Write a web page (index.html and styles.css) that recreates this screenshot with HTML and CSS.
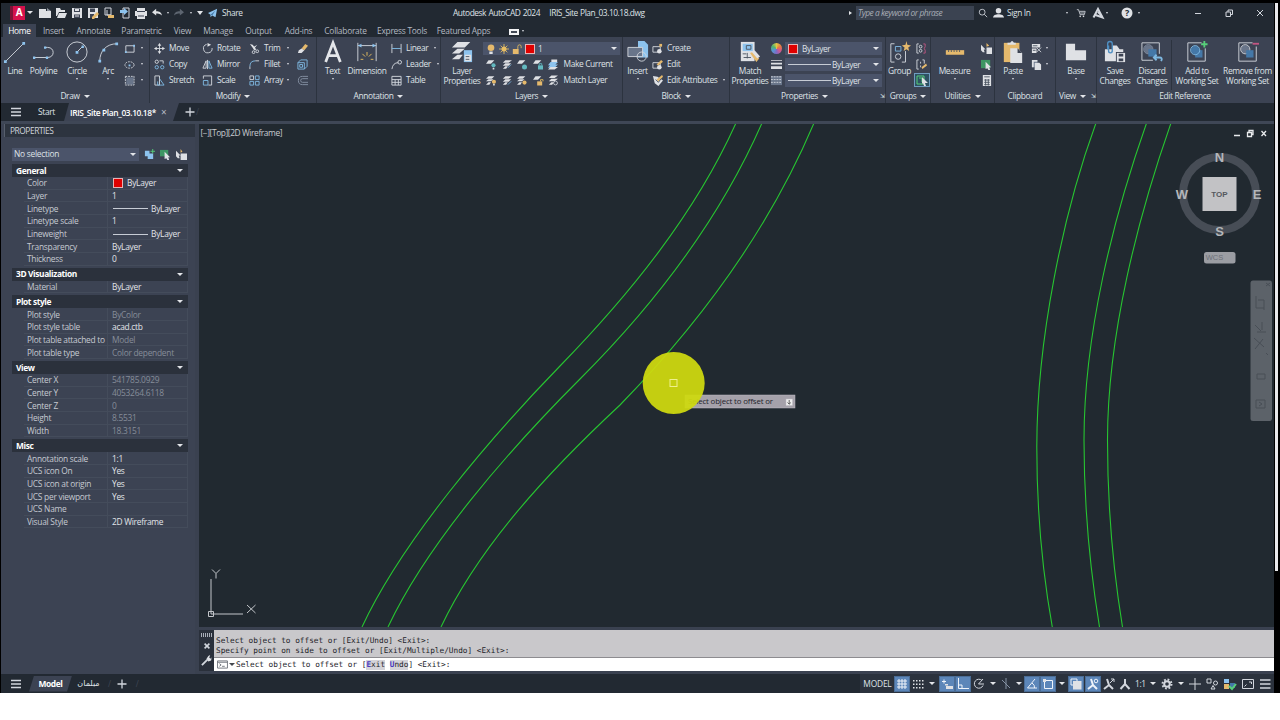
FILE: index.html
```html
<!DOCTYPE html>
<html lang="en">
<head>
  <meta charset="UTF-8" />
  <meta name="viewport" content="width=device-width, initial-scale=1" />
  <title>Autodesk AutoCAD 2024 - IRIS_Site Plan_03.10.18.dwg</title>
  <link rel="stylesheet" href="styles.css">
</head>
<body>
<div class="screen">
<div class="app">

  <!-- Title bar -->
  <header class="titlebar">
    <div class="quick">
      <span class="logo">A</span><i class="caret"></i>
      <svg class="ic q1" viewBox="0 0 12 12"><path class="w" d="M0 2h7v2h5v7H0z"/><path class="g" d="M8 1l4 3H8z"/></svg>
      <svg class="ic" viewBox="0 0 12 12"><path class="w" d="M1 1h4l1 2h4v2H4L2 9H1z"/><path class="w" d="M4 6h8l-2 5H2z"/></svg>
      <svg class="ic" viewBox="0 0 12 12"><path class="w" d="M1 1h10v10H1z"/><path class="k" d="M3 1.5h6V5H3zM3 7.500h6V11H3z"/><path class="w" d="M4 2h4v2H4zM4 8.500h4v1H4z"/></svg>
      <svg class="ic" viewBox="0 0 12 12"><path class="w" d="M1 1h10v10H1z"/><path class="k" d="M3 1.500h5V5H3zM3 7h4v4H3z"/><path class="y" d="M5 10l5-5 2 2-5 5H5z"/></svg>
      <svg class="ic" viewBox="0 0 12 12"><path class="l" d="M2 1h6v7H2z"/><path class="l" d="M4 3v5h4"/><path class="y" d="M5 8h6v3H5z"/></svg>
      <svg class="ic" viewBox="0 0 12 12"><path class="l" d="M4 1h6v10H4z"/><path class="b" d="M1 3h4V1l4 3.500L5 8V6H1z"/></svg>
      <svg class="ic" viewBox="0 0 12 12"><path class="w" d="M2 1h8v3H2zM0 4h12v5H0zM2 9h8v3H2z"/><path class="k" d="M2 4h8v1H2zM3 8.500h6v1H3z"/></svg>
      <svg class="ic undo" viewBox="0 0 12 12"><path class="w" d="M0 5l5-4v3c4 0 6 1 7 5-2-2-4-2.500-7-2.500V9z"/></svg><i class="dot"></i>
      <svg class="ic redo" viewBox="0 0 12 12"><path d="M12 5L7 1v3C3 4 1 5 0 9c2-2 4-2.500 7-2.500V9z"/></svg><i class="dot"></i>
      <i class="caret bar"></i>
      <svg class="ic share" viewBox="0 0 12 12"><path class="b" d="M0 6l11-5-2 10-4-2-2 2V8z"/><path class="n" d="M3 8l6-5-4 6"/></svg>
      <span>Share</span>
    </div>
    <div class="doc-title">Autodesk AutoCAD 2024&nbsp;&nbsp;&nbsp; IRIS_Site Plan_03.10.18.dwg</div>
    <div class="account">
      <i class="right-arrow"></i>
      <div class="search">Type a keyword or phrase</div>
      <svg class="ic mag" viewBox="0 0 12 12"><circle class="l" cx="5" cy="5" r="3.500"/><path class="l" d="M7.500 7.500L11 11"/></svg>
      <svg class="ic user" viewBox="0 0 12 12"><circle class="w" cx="6" cy="3.500" r="3"/><path class="w" d="M0 11c0-5 12-5 12 0z"/></svg>
      <span class="sign">Sign In</span><i class="dot"></i>
      <svg class="ic cart" viewBox="0 0 12 12"><path class="l" d="M1 2h2l2 6h5l1-4H4M5 6h5"/><circle class="w" cx="5" cy="10" r="1"/><circle class="w" cx="9" cy="10" r="1"/></svg>
      <svg class="ic" viewBox="0 0 12 12"><path class="l t" d="M1.500 10.500L6 2l4.500 8.500L3.500 8M6 5l4 4"/></svg><i class="dot"></i>
      <svg class="ic help" viewBox="0 0 12 12"><circle class="w" cx="6" cy="6" r="5.500"/><text x="6" y="9" text-anchor="middle">?</text></svg><i class="dot"></i>
    </div>
    <div class="window-buttons">
      <svg class="ic" viewBox="0 0 10 10"><path class="l" d="M2 5.500h6"/></svg>
      <svg class="ic" viewBox="0 0 10 10"><path class="l" d="M2 4h4.500v4.500H2zM4 4V2h4.500v4.500h-2"/></svg>
      <svg class="ic" viewBox="0 0 10 10"><path class="l" d="M2 2l6 6M8 2L2 8"/></svg>
    </div>
  </header>

  <!-- Ribbon tabs -->
  <nav class="tabs">
    <span class="tab active">Home</span><span class="tab">Insert</span><span class="tab">Annotate</span><span class="tab">Parametric</span><span class="tab">View</span><span class="tab">Manage</span><span class="tab">Output</span><span class="tab">Add-ins</span><span class="tab">Collaborate</span><span class="tab">Express Tools</span><span class="tab">Featured Apps</span>
    <span class="tab-box"></span><i class="dot"></i>
  </nav>

  <!-- Ribbon -->
  <section class="ribbon">
    <div class="panel draw">
      <div class="tools">
        <div class="big"><svg viewBox="0 0 24 24"><path class="l" d="M2 22L22 2"/><path class="b" d="M0 21h3v3H0zM20 1h3v3h-3z"/></svg>Line</div>
        <div class="big"><svg viewBox="0 0 24 24"><path class="l" d="M1 18h15c8 0 8-11 0-11h-3"/><path class="b" d="M0 17h2.500v2.500H0zM14 17h2.500v2.500H14zM12 6h2.500v2.500H12z"/></svg>Polyline</div>
        <div class="big"><svg viewBox="0 0 24 24"><circle class="l" cx="12" cy="12" r="11"/><path class="l" d="M12 12l6-6"/><path class="b" d="M10.500 11h3v3h-3zM17 5h2.500v2.500H17z"/></svg>Circle<i class="dot"></i></div>
        <div class="big"><svg viewBox="0 0 24 24"><path class="l" d="M3 22C3 11 10 3 22 3"/><path class="b" d="M1.500 20.500h3v3h-3zM6 8.500h3v3H6zM20 1.500h3v3h-3z"/></svg>Arc<i class="dot"></i></div>
        <div class="stack">
          <div class="small"><svg viewBox="0 0 12 12"><path class="l" d="M2 3h9v7H2z"/><path class="b" d="M1 9h2v2H1zM10 2h2v2h-2z"/></svg><i class="dot"></i></div>
          <div class="small"><svg viewBox="0 0 12 12"><ellipse class="l d" cx="6" cy="6.500" rx="5" ry="3.500"/><path class="b" d="M5 6h2v2H5z"/></svg><i class="dot"></i></div>
          <div class="small"><svg viewBox="0 0 12 12"><path class="m" d="M2.500 2.500h8v8h-8z"/><path class="l d" d="M1.500 1.500h9.500V11H1.500z"/></svg><i class="dot"></i></div>
        </div>
      </div>
      <div class="caption">Draw <i class="caret"></i></div>
    </div>

    <div class="panel modify">
      <div class="tools">
        <div class="stack">
          <div class="small"><svg viewBox="0 0 12 12"><path class="l" d="M6 1v10M1 6h10"/><path class="w" d="M6 0l2 3H4zM6 12l2-3H4zM0 6l3-2v4zM12 6L9 4v4z"/></svg>Move</div>
          <div class="small"><svg viewBox="0 0 12 12"><circle class="l" cx="3" cy="3" r="1.800"/><circle class="bl" cx="3" cy="9" r="1.800"/><circle class="bl" cx="9" cy="9" r="1.800"/><path class="l" d="M6 2h4v3"/></svg>Copy</div>
          <div class="small"><svg viewBox="0 0 12 12"><path class="l" d="M1 1h5v10H1z"/><path class="bl" d="M6 4l5 7H4V7"/></svg>Stretch</div>
        </div>
        <div class="stack">
          <div class="small"><svg viewBox="0 0 12 12"><path class="l" d="M5 1.500a4.700 4.700 0 1 0 6 4"/><path class="w" d="M6 0l4 2-4 2z"/></svg>Rotate</div>
          <div class="small"><svg viewBox="0 0 12 12"><path class="l" d="M4.500 2v8H1zM6 1v10"/><path class="bl" d="M7.500 2v8H11z"/></svg>Mirror</div>
          <div class="small"><svg viewBox="0 0 12 12"><path class="l" d="M1.500 4V1h9v10H7"/><path class="bl" d="M1.500 6h5v5h-5z"/></svg>Scale</div>
        </div>
        <div class="stack carets">
          <div class="small"><svg viewBox="0 0 12 12"><path class="w" d="M1 1l3 1 4 5-2 1zM9 2L5 7 4 5z"/><circle class="l" cx="5" cy="10" r="1.500"/><circle class="l" cx="9" cy="9" r="1.500"/></svg>Trim<i class="dot"></i></div>
          <div class="small"><svg viewBox="0 0 12 12"><path class="l" d="M1 11V8"/><path class="bl" d="M1 8q0-6 6-6"/><path class="l" d="M7 2h4"/></svg>Fillet<i class="dot"></i></div>
          <div class="small"><svg viewBox="0 0 12 12"><path class="l" d="M1 1h4v4H1z"/><path class="bl" d="M7 1h4v4H7zM1 7h4v4H1zM7 7h4v4H7z"/></svg>Array<i class="dot"></i></div>
        </div>
        <div class="stack icons">
          <div class="small"><svg viewBox="0 0 12 12"><path class="y" d="M5 6l4-5 3 2-4 5z"/><path class="w" d="M2 8l3-2 3 2-3 3H1z"/></svg></div>
          <div class="small"><svg viewBox="0 0 12 12"><path class="bl" d="M1 4h7v7H1zM1 4l3-3h7v7l-3 3M3 6h3v3H3z"/></svg></div>
          <div class="small"><svg viewBox="0 0 12 12"><path class="ml" d="M12 1.500H6a4.500 4.500 0 0 0 0 9h6M12 4H6a2 2 0 0 0 0 4h6"/></svg></div>
        </div>
      </div>
      <div class="caption">Modify <i class="caret"></i></div>
    </div>

    <div class="panel annotation">
      <div class="tools">
        <div class="big"><svg viewBox="0 0 24 24"><path class="al" d="M4 23l8-21 8 21M7 16h10"/></svg>Text<i class="dot"></i></div>
        <div class="big"><svg viewBox="0 0 24 24"><path class="l" d="M2 2v20M22 2v20M2 5h20"/><path class="b" d="M2 5l4-2v4zM22 5l-4-2v4z"/><path class="yl" d="M5 20h3M16 20h3M7 14l3 3M12 12v4M17 14l-3 3"/></svg>Dimension</div>
        <div class="stack">
          <div class="small"><svg viewBox="0 0 12 12"><path class="l" d="M1 1v10M11 1v10"/><path class="bl" d="M1 6h10"/></svg>Linear<i class="dot"></i></div>
          <div class="small"><svg viewBox="0 0 12 12"><path class="l" d="M1 11q1-7 7-7"/><circle class="l" cx="9.500" cy="3.500" r="2"/></svg>Leader<i class="dot"></i></div>
          <div class="small"><svg viewBox="0 0 12 12"><path class="l" d="M1 1.500h10v9.500H1zM1 5h10M1 8h10M4.500 5v6M8 5v6"/></svg>Table</div>
        </div>
      </div>
      <div class="caption">Annotation <i class="caret"></i></div>
    </div>

    <div class="panel layers">
      <div class="tools">
        <div class="big"><svg viewBox="0 0 24 24"><path class="w" d="M7 1h14l-6 6H1zM7 8.500h8l-6 5H1zM7 15h6l-4 5H1z"/><path class="b" d="M14 10h9v13h-9z"/><path class="w" d="M15 15h7v7h-7z"/><path class="kl" d="M16 17h4M16 20h4"/></svg>Layer<br>Properties</div>
        <div class="layer-grid">
          <div class="combo layer-combo">
            <svg viewBox="0 0 12 12"><circle class="y" cx="6" cy="4.500" r="4"/><path class="w" d="M4 9h4v3H4z"/></svg>
            <svg viewBox="0 0 12 12"><circle class="y" cx="6" cy="6" r="3"/><path class="yl" d="M6 0v12M0 6h12M2 2l8 8M10 2l-8 8"/></svg>
            <svg viewBox="0 0 12 12"><path class="y" d="M1 6h7v6H1z"/><path class="yl" d="M7 6V3a2 2 0 0 1 4 0v2"/></svg>
            <b class="swatch"></b><span>1</span><i class="caret"></i>
          </div>
          <div class="layer-row">
            <svg viewBox="0 0 12 12"><path class="w" d="M3 1h7L6 5H0z"/><circle class="c" cx="9" cy="7" r="2.500"/><path class="w" d="M8 10h2v2H8z"/></svg>
            <svg viewBox="0 0 12 12"><path class="w" d="M4 1h8L8 4H1zM4 4.500h7L8 7.500H1zM4 8h3l-2 3H1z"/><path class="bl" d="M7 10l4-4"/></svg>
            <svg viewBox="0 0 12 12"><path class="w" d="M3 1h7L6 5H0z"/><circle class="c" cx="9" cy="9" r="3"/></svg>
            <svg viewBox="0 0 12 12"><path class="w" d="M3 1h7L6 5H0z"/><path class="c" d="M6 7h6v5H6z"/><path class="cl" d="M7.500 7V5h3v2"/></svg>
            <svg viewBox="0 0 12 12"><path class="w" d="M4 0h7v3H4z"/><path class="b" d="M3 3h9L8 7H0zM3 6h9L8 10H0z"/><path class="w" d="M3 9h9l-4 3H0z"/></svg>
            <span>Make Current</span>
          </div>
          <div class="layer-row">
            <svg viewBox="0 0 12 12"><path class="w" d="M3 1h7L7 4H0zM3 4.500h6L6 7H0zM3 8h3l-2 3H0z"/><circle class="y" cx="9.500" cy="7.500" r="2.500"/><path class="w" d="M8.500 10h2v2h-2z"/></svg>
            <svg viewBox="0 0 12 12"><path class="w" d="M4 1h8L8 4H1zM4 4.500h7L8 7.500H1zM4 8h3l-2 3H1z"/><path class="bl" d="M7 11l4-4"/></svg>
            <svg viewBox="0 0 12 12"><path class="w" d="M3 1h7L7 4H0zM3 4.500h6L6 7H0zM3 8h3l-2 3H0z"/><circle class="y" cx="9" cy="8.500" r="2.500"/></svg>
            <svg viewBox="0 0 12 12"><path class="w" d="M3 1h7L6 5H0z"/><path class="y" d="M5 7h6v5H5z"/><path class="yl" d="M9 7V5h3v2"/></svg>
            <svg viewBox="0 0 12 12"><path class="w" d="M4 0h8L8 3H1zM4 4h8L8 7H1zM4 8h3l-2 3H1z"/><circle class="l" cx="9" cy="9" r="2.300"/></svg>
            <span>Match Layer</span>
          </div>
        </div>
      </div>
      <div class="caption">Layers <i class="caret"></i></div>
    </div>

    <div class="panel block">
      <div class="tools">
        <div class="big"><svg viewBox="0 0 24 24"><path class="b" d="M12 0h7l4 4v14H12z"/><path class="m" d="M1 7h16v10H1z"/><path class="l" d="M1 7h16v10H1z"/><circle class="l" cx="16" cy="17" r="5"/></svg>Insert<i class="dot"></i></div>
        <div class="stack">
          <div class="small"><svg viewBox="0 0 12 12"><path class="l" d="M1 4h8v6H1z"/><circle class="w" cx="8" cy="9" r="2.500"/><path class="y" d="M8 1h3v3H8z"/></svg>Create</div>
          <div class="small"><svg viewBox="0 0 12 12"><path class="l" d="M1 4h8v6H1z"/><circle class="w" cx="8" cy="9" r="2.500"/><path class="y" d="M5 6l5-5 2 2-5 4z"/></svg>Edit</div>
          <div class="small"><svg viewBox="0 0 12 12"><path class="w" d="M1 1l5 1 6 4-5 6-4-3z"/><path class="y" d="M5 5l6-5 1 2-5 5z"/><path class="kl" d="M4 5l3 3 3-4"/></svg>Edit Attributes<i class="dot"></i></div>
        </div>
      </div>
      <div class="caption">Block <i class="caret"></i></div>
    </div>

    <div class="panel props">
      <div class="tools">
        <div class="big"><svg viewBox="0 0 24 24"><path class="w" d="M2 1h15v21H2z"/><path class="b" d="M4 3h11v8H4z"/><path class="kl" d="M8 5h5v4H8zM4 14h4M5 18h8M9 13v6"/><path class="y" d="M12 13l3-1 7 7-3 4z"/><path class="w" d="M14 12l3-2 6 7-3 2z"/></svg>Match<br>Properties</div>
        <div class="stack icons">
          <div class="small"><b class="wheel"></b></div>
          <div class="small"><svg viewBox="0 0 12 12"><path class="w" d="M0 1h12v1H0zM0 4h12v2H0zM0 8h12v3H0z"/></svg></div>
          <div class="small"><svg viewBox="0 0 12 12"><path class="m" d="M0 1h12v10H0z"/><path class="l d" d="M0 2h12M0 5h12M0 8h12"/></svg></div>
        </div>
        <div class="combos">
          <div class="combo"><b class="swatch"></b><span>ByLayer</span><i class="caret"></i></div>
          <div class="combo"><b class="rule"></b><span>ByLayer</span><i class="caret"></i></div>
          <div class="combo"><b class="rule"></b><span>ByLayer</span><i class="caret"></i></div>
        </div>
      </div>
      <div class="caption">Properties <i class="caret"></i><small>⇲</small></div>
    </div>

    <div class="panel groups">
      <div class="tools">
        <div class="big"><svg viewBox="0 0 24 24"><path class="l" d="M6 3H2v20h4M14 23h4V11"/><path class="bl" d="M7 6h6v5H7z"/><circle class="l" cx="10" cy="17" r="3"/><path class="y" d="M19 0l1 4 4 1-3 2 1 4-3-2-3 2 1-4-3-2 4-1z"/></svg>Group</div>
        <div class="stack icons">
          <div class="small"><svg viewBox="0 0 12 12"><path class="l" d="M3 1H1v10h2"/><circle class="l" cx="5" cy="4" r="1.500"/><circle class="l" cx="5" cy="8.500" r="1.500"/><path class="pl" d="M8 1h2v3l-1 2 1 2v3H8"/></svg></div>
          <div class="small"><svg viewBox="0 0 12 12"><path class="l" d="M3 1H1v10h2M7 1h2v4M5 3v2M5 7v2"/><path class="y" d="M6 9l5-4 1 2-5 4z"/></svg></div>
          <div class="small"><svg class="on" viewBox="0 0 16 14"><path class="gl" d="M3 3h7v8H3zM5 5h3v4"/><path class="w" d="M8 4l6 6-3 0 1 3-2 0-1-3-1 1z"/></svg></div>
        </div>
      </div>
      <div class="caption">Groups <i class="caret"></i></div>
    </div>

    <div class="panel utilities">
      <div class="tools">
        <div class="big"><svg viewBox="0 0 24 24"><path class="y" d="M2 10h20v5H2z"/><path class="kl" d="M5 10v2M8 10v2M11 10v2M14 10v2M17 10v2"/></svg>Measure<i class="dot"></i></div>
        <div class="stack icons">
          <div class="small"><svg viewBox="0 0 12 12"><path class="w" d="M0 2l5 5-2 0 1 3-2 0L0 8zM6 5h6v7H6z"/><path class="y" d="M6 0l3 3-3 1z"/></svg></div>
          <div class="small"><svg viewBox="0 0 12 12"><path class="gg" d="M0 1h10v9H0z"/><path class="w" d="M5 3l6 6-2 0 1 3-2 0-1-2-2 1z"/></svg></div>
          <div class="small"><svg viewBox="0 0 12 12"><path class="w" d="M2 0h9v12H2z"/><path class="kl" d="M3.500 2h6M3.500 5.500h6M3.500 8h6M3.500 10.500h6M5 4.500v7M8 4.500v7"/></svg></div>
        </div>
      </div>
      <div class="caption">Utilities <i class="caret"></i></div>
    </div>

    <div class="panel clipboard">
      <div class="tools">
        <div class="big"><svg viewBox="0 0 24 24"><path class="y" d="M2 2h17v21H2z"/><path class="w" d="M6 4h9V2h-2q-2-4-4 0H6zM9 8h8l5 5v11H9z"/><path class="k" d="M17 8l5 5h-5z"/></svg>Paste<i class="dot"></i></div>
        <div class="stack carets">
          <div class="small"><svg viewBox="0 0 12 12"><path class="w" d="M1 1h9v4H1zM1 6h5v5H1z"/><path class="kl" d="M2 3h5M2 8h3"/><path class="l" d="M6 10l5-5M6 5l5 5"/></svg><i class="dot"></i></div>
          <div class="small"><svg viewBox="0 0 12 12"><path class="m" d="M1 1h6v8H1z"/><path class="w" d="M1 1h6v2H3v6H1zM4 4h5l2 2v6H4z"/></svg><i class="dot"></i></div>
        </div>
      </div>
      <div class="caption">Clipboard</div>
    </div>

    <div class="panel view">
      <div class="tools">
        <div class="big"><svg viewBox="0 0 24 24"><path class="w" d="M1 3h10v7h12v11H1z"/></svg>Base<i class="dot"></i></div>
      </div>
      <div class="caption">View <i class="caret"></i><small>⇲</small></div>
    </div>

    <div class="panel reference">
      <div class="tools">
        <div class="big"><svg viewBox="0 0 24 24"><path class="w" d="M1 9h8V5h5l3 4h4v13H1z"/><path class="nl" d="M4 9V3a2.500 2.500 0 0 1 5 0v8a2 2 0 0 1-4 0V5"/><path class="k" d="M13 12h11v12H13z"/><path class="w" d="M14 13h9v10h-9z"/><path class="k" d="M16 14h5v3h-5zM16 19h5v3h-5z"/></svg>Save<br>Changes</div>
        <div class="big"><svg viewBox="0 0 24 24"><path class="l" d="M20 14V2H1v19h12"/><circle class="m" cx="8" cy="9" r="4.500"/><circle class="ml" cx="8" cy="9" r="5"/><path class="n" d="M8 9h9v8H8z"/><path class="bl t" d="M14 18h6q4 0 2 4M17 15l-3 3 3 3"/></svg>Discard<br>Changes</div>
        <div class="big"><svg viewBox="0 0 24 24"><path class="l" d="M17 2H2v20h19V8"/><circle class="n" cx="10" cy="10" r="4.500"/><path class="n" d="M10 10h8v8h-8z"/><circle class="bl" cx="10" cy="10" r="5"/><path class="gl t" d="M20 0v7M16.500 3.500h7"/></svg>Add to<br>Working Set</div>
        <div class="big"><svg viewBox="0 0 24 24"><path class="l" d="M17 2H2v20h19V6"/><circle class="m" cx="9" cy="9" r="4.500"/><circle class="l" cx="9" cy="9" r="5"/><path class="n" d="M10 10h8v8h-8z"/><path class="pl t" d="M17 3h7"/></svg>Remove from<br>Working Set</div>
      </div>
      <div class="caption">Edit Reference</div>
    </div>
  </section>

  <!-- Open files -->
  <div class="files">
    <svg class="burger" viewBox="0 0 12 12"><path class="l" d="M1 2.500h10M1 6h10M1 9.500h10"/></svg>
    <span class="file start">Start</span>
    <span class="file current">IRIS_Site Plan_03.10.18*<em>×</em></span>
    <svg class="plus" viewBox="0 0 12 12"><path class="l" d="M6 1.500v9M1.500 6h9"/></svg>
    <span class="slash">/</span>
  </div>

  <main class="work">
    <!-- Properties palette -->
    <aside class="palette">
      <h2>PROPERTIES</h2>
      <div class="selection">
        <div class="combo"><span>No selection</span><i class="caret"></i></div>
        <svg viewBox="0 0 12 12"><path class="b" d="M1 2h5v6H1zM4 5h6v6H4z"/><path class="gl" d="M9.500 0v5M7 2.500h5"/></svg>
        <svg viewBox="0 0 12 12"><path class="gg" d="M0 1h9v7H0z"/><path class="w" d="M5 3l6 6-2 0 1 3-2 0-1-2-2 1z"/></svg>
        <svg viewBox="0 0 12 12"><path class="w" d="M0 2l5 5-2 0 1 3-2 0L0 8zM5 5h7v7H5z"/><path class="y" d="M5 0l2 3-2 1z"/></svg>
      </div>

      <h3>General<i class="caret"></i></h3>
      <dl>
        <dt>Color</dt><dd><b class="swatch"></b>ByLayer</dd>
        <dt>Layer</dt><dd>1</dd>
        <dt>Linetype</dt><dd><b class="rule"></b>ByLayer</dd>
        <dt>Linetype scale</dt><dd>1</dd>
        <dt>Lineweight</dt><dd><b class="rule"></b>ByLayer</dd>
        <dt>Transparency</dt><dd>ByLayer</dd>
        <dt>Thickness</dt><dd>0</dd>
      </dl>
      <h3>3D Visualization<i class="caret"></i></h3>
      <dl>
        <dt>Material</dt><dd>ByLayer</dd>
      </dl>
      <h3>Plot style<i class="caret"></i></h3>
      <dl>
        <dt>Plot style</dt><dd class="off">ByColor</dd>
        <dt>Plot style table</dt><dd>acad.ctb</dd>
        <dt>Plot table attached to</dt><dd class="off">Model</dd>
        <dt>Plot table type</dt><dd class="off">Color dependent</dd>
      </dl>
      <h3>View<i class="caret"></i></h3>
      <dl>
        <dt>Center X</dt><dd class="off">541785.0929</dd>
        <dt>Center Y</dt><dd class="off">4053264.6118</dd>
        <dt>Center Z</dt><dd class="off">0</dd>
        <dt>Height</dt><dd class="off">8.5531</dd>
        <dt>Width</dt><dd class="off">18.3151</dd>
      </dl>
      <h3>Misc<i class="caret"></i></h3>
      <dl>
        <dt>Annotation scale</dt><dd>1:1</dd>
        <dt>UCS icon On</dt><dd>Yes</dd>
        <dt>UCS icon at origin</dt><dd>Yes</dd>
        <dt>UCS per viewport</dt><dd>Yes</dd>
        <dt>UCS Name</dt><dd></dd>
        <dt>Visual Style</dt><dd>2D Wireframe</dd>
      </dl>
    </aside>

    <div class="right">
      <!-- Model space -->
      <svg class="canvas" viewBox="199 124 1075 503">
        <g class="road">
          <path d="M736 123C695 214 630 294 560 366S402 541 362 627"/>
          <path d="M762 123C720 219 652 307 580 379S427 544 388 627"/>
          <path d="M814 123C768 232 698 325 620 405C546 474 479 547 441 627"/>
          <path d="M1096 123C1063 213 1036.800 340 1036.800 447C1036.800 510 1043 575 1052.300 627"/>
          <path d="M1146.600 123C1113 218 1084 335 1084 440C1084 510 1091 575 1099.500 627"/>
          <path d="M1171 123C1138 217 1107.500 335 1107.500 440C1107.500 510 1114 575 1122.500 627"/>
        </g>
        <text class="view-label" x="200.500" y="136" textLength="82">[−][Top][2D Wireframe]</text>

        <g class="doc-buttons">
          <path d="M1234 135.500h6M1247.500 132.500h4v4h-4zM1249 132v-1.500h4v4h-1.500M1261.500 131l4.500 5M1266 131l-4.500 5"/>
        </g>

        <g class="viewcube">
          <circle cx="1219.500" cy="193.500" r="36.500"/>
          <rect x="1202.500" y="177" width="34" height="34"/>
          <text class="top" x="1219.500" y="197">TOP</text>
          <text x="1219.500" y="161.500">N</text>
          <text x="1219.500" y="236">S</text>
          <text x="1182" y="198.500">W</text>
          <text x="1257" y="198.500">E</text>
          <rect class="wcs" x="1204" y="252" width="31.500" height="11.500" rx="2.500"/>
          <text class="wcs-text" x="1214.500" y="259.500">WCS</text>
        </g>

        <g class="navbar">
          <rect x="1250.500" y="280.500" width="21.500" height="140.500" rx="2.500"/>
          <path d="M1266 283l4 3M1270 283l-4 3M1256 296v12h8M1258 300h6v10M1255 325l6 6M1262 322v8M1257 332h9M1254 338l10 9M1263 339l-8 10M1266 353l2 2M1257 374h8v5h-8zM1256 400h9v8h-9zM1259 402l3 2-3 2"/>
        </g>

        <g class="ucs">
          <path d="M211 579v35h32M208.500 611.500h5v5h-5zM212 569.500l4 4 4-4M216 573.500v5M247 605l8.500 8M255.500 605l-8.500 8"/>
        </g>

        <g class="prompt">
          <rect x="685" y="395" width="110" height="13"/>
          <text x="688" y="403.500" textLength="85">Select object to offset or</text>
          <rect class="key" x="786" y="399" width="6.500" height="6.500"/>
          <path d="M789.200 400v4M787.500 402.500l1.700 1.700 1.700-1.700"/>
        </g>
        <g class="cursor">
          <circle cx="673.700" cy="383" r="31"/>
          <rect x="670" y="379.500" width="7" height="7"/>
        </g>
      </svg>

      <!-- Command line -->
      <div class="command">
        <div class="command-side">
          <b class="grip"></b>
          <svg viewBox="0 0 10 10"><path class="l t" d="M2 2l6 6M8 2L2 8"/></svg>
          <svg viewBox="0 0 12 12"><path class="l t" d="M1 11l6-6"/><path class="w" d="M6 4l2-3 2-1-1 3 2 1 1-2-1 4-3 1z"/></svg>
        </div>
        <div class="command-text">
          <div class="history">
            <p>Select object to offset or [Exit/Undo] &lt;Exit&gt;:</p>
            <p>Specify point on side to offset or [Exit/Multiple/Undo] &lt;Exit&gt;:</p>
          </div>
          <div class="input">
            <svg viewBox="0 0 12 10"><path d="M.5 1h11v8H.5zM.5 2.500h11M2.500 4l2 1.500-2 1.500M5.500 7h3"/></svg><i class="caret"></i>
            <span>Select object to offset or [<mark>Exit</mark> <mark>Undo</mark>] &lt;Exit&gt;:</span>
          </div>
        </div>
      </div>
    </div>
  </main>

  <!-- Layout tabs and status bar -->
  <footer class="status">
    <svg class="burger" viewBox="0 0 12 12"><path class="l" d="M1 2.500h10M1 6h10M1 9.500h10"/></svg>
    <span class="layout current">Model</span>
    <span class="layout" lang="fa">مبلمان</span>
    <span class="slash">/</span>
    <svg class="plus" viewBox="0 0 12 12"><path class="l" d="M6 1.500v9M1.500 6h9"/></svg>
    <span class="slash">/</span>
    <div class="toggles">
      <span class="cell model">MODEL</span>
      <span class="cell on"><svg viewBox="0 0 12 12"><path class="l" d="M3 1v10M6 1v10M9 1v10M1 3h10M1 6h10M1 9h10"/></svg></span>
      <span class="cell"><svg viewBox="0 0 12 12"><path class="w" d="M1 2h1.500v1.500H1zM4 2h1.500v1.500H4zM7 2h1.500v1.500H7zM10 2h1.500v1.500H10zM1 5.500h1.500V7H1zM4 5.500h1.500V7H4zM7 5.500h1.500V7H7zM10 5.500h1.500V7H10zM1 9h1.500v1.500H1zM4 9h1.500v1.500H4zM7 9h1.500v1.500H7zM10 9h1.500v1.500H10z"/></svg></span>
      <span class="cell arrow gap"><i class="caret"></i></span>
      <span class="cell on"><svg viewBox="0 0 12 12"><path class="l" d="M3 1.500v4M1 3.500h4"/><path class="w" d="M4 6h3v1.500H4zM5 8h7v3H5z"/></svg></span>
      <span class="cell on"><svg viewBox="0 0 12 12"><path class="l" d="M1.500 0v10.500H12M1.500 7h3.500v3.500"/></svg></span>
      <span class="cell"><svg viewBox="0 0 12 12"><path class="l" d="M9 2.500a4.500 4.500 0 1 0 1 5M5.500 6L10 1M5.500 6H11"/></svg></span>
      <span class="cell arrow"><i class="caret"></i></span>
      <span class="cell"><svg viewBox="0 0 12 12"><path class="ml" d="M2 2l8 8M6 0v11"/></svg></span>
      <span class="cell arrow"><i class="caret"></i></span>
      <span class="cell on"><svg viewBox="0 0 12 12"><path class="l" d="M9 1L1.500 10H11M6 5q3 2 2.500 5"/></svg></span>
      <span class="cell on"><svg viewBox="0 0 12 12"><path class="l" d="M2.500 2.500h8v8h-8z"/><path class="w" d="M1 1h3v3H1z"/></svg></span>
      <span class="cell arrow wide"><i class="caret"></i></span>
      <span class="cell on"><svg viewBox="0 0 12 12"><path class="l" d="M1 1h6v6H1z"/><path class="w" d="M3 3h8.500v8.500H3z"/></svg></span>
      <span class="cell on shift"><svg viewBox="0 0 12 12"><path class="l t" d="M1 11l5-4 4 4M6 7L4 1"/><circle class="l" cx="9" cy="3" r="1.800"/></svg></span>
      <span class="cell"><svg viewBox="0 0 12 12"><path class="l t" d="M1 11l5-4 4 4M6 7L4 1"/><path class="l" d="M7 5l4-4M8 1h3v3"/></svg></span>
      <span class="cell"><svg viewBox="0 0 12 12"><path class="l t" d="M1.500 11L6 6l4.500 5M6 7V1"/></svg></span>
      <span class="cell scale">1:1</span>
      <span class="cell arrow"><i class="caret"></i></span>
      <span class="cell tool"><svg viewBox="0 0 12 12"><circle class="gear" cx="6" cy="6" r="4.500"/><circle class="l t" cx="6" cy="6" r="2.800"/></svg></span>
      <span class="cell arrow"><i class="caret"></i></span>
      <span class="cell tool"><svg viewBox="0 0 12 12"><path class="l" d="M6 0v12M0 6h12"/></svg></span>
      <span class="cell tool"><svg viewBox="0 0 12 12"><path class="l" d="M1 1h4v4H1zM5 11l2-3.500L9 11z"/><circle class="l" cx="9.500" cy="5" r="2"/></svg></span>
      <span class="cell tool"><svg viewBox="0 0 12 12"><path class="b" d="M0 1h5v4H0z"/><path class="y" d="M0 6h5v5H0z"/><path class="n" d="M6 5h5v5H6z"/><path class="gl t" d="M5 8l3 3 4-5"/></svg></span>
      <span class="cell tool"><svg viewBox="0 0 12 12"><path class="l" d="M.5 1.500h11v9H.5zM2.500 8.500l2-2M7 4h2.500v2"/></svg></span>
      <span class="cell tool"><svg viewBox="0 0 12 12"><path class="l lines" d="M1 2h10.500M1 6h10.500M1 10h10.500"/></svg></span>
    </div>
  </footer>

</div>
<div class="edge"></div>
</div>
</body>
</html>
```
FILE: styles.css
```css
:root {
  --dark: #222932;
  --panel: #3c4353;
  --combo: #4b546a;
  --line: #2c333f;
  --text: #dfe2e7;
  --blue: #5c86b9;
}

* {
  box-sizing: border-box;
  margin: 0;
  padding: 0;
}

body {
  width: 1280px;
  height: 720px;
  overflow: hidden;
  background: #fff;
  color: var(--text);
  font-family: "Open Sans", "Noto Sans", sans-serif;
  font-size: 8.400px;
  letter-spacing: -.36px;
  line-height: 10px;
  white-space: nowrap;
}

.screen {
  display: flex;
  height: 693px;
  padding: 3px 0 0 1px;
  background: #000;
}

.app {
  display: flex;
  flex-direction: column;
  width: 1273px;
  background: var(--dark);
}

.edge {
  width: 3px;
  height: 568px;
  margin-left: 1px;
  background: #e9e9ec;
}

/* Icon paint */
svg { flex: none; overflow: visible; }
.w { fill: #dfe1e5; }
.g { fill: #8d949f; }
.k { fill: #3c4353; }
.b { fill: #8dc3ee; }
.n { fill: #4478a8; }
.m { fill: #69758a; }
.y { fill: #e5b96c; }
.c { fill: #63b9c0; }
.gg { fill: #3d9663; }
.l, .bl, .ml, .yl, .kl, .cl, .gl, .pl, .nl, .al { fill: none; stroke-width: 1; }
.l { stroke: #d2d6dd; }
.bl { stroke: #7fb9e2; }
.ml { stroke: #8592a4; }
.yl { stroke: #e9c05f; }
.kl { stroke: #4c5563; }
.cl { stroke: #63b9c0; }
.gl { stroke: #57cf7a; }
.pl { stroke: #c25581; }
.nl { stroke: #4f8fc2; stroke-width: 1.5; }
.al { stroke: #e4e6ea; stroke-width: 3; }
.t { stroke-width: 2; }
.lines { stroke-width: 1.500; }
.d { stroke-dasharray: 2 1; }

.caret {
  flex: none;
  display: inline-block;
  border: 3px solid transparent;
  border-top: 3.500px solid #e3e5e9;
  border-bottom: 0;
}

.dot {
  flex: none;
  display: inline-block;
  border: 1.500px solid transparent;
  border-top: 2px solid #d9dce2;
  border-bottom: 0;
}

.swatch {
  flex: none;
  width: 10px;
  height: 10px;
  background: #e00000;
  border: 1px solid #e6b3b3;
}

/* Title bar */
.titlebar {
  display: flex;
  align-items: center;
  height: 21px;
  padding-bottom: 2px;
}

.ic { width: 12px; height: 12px; }

.quick {
  display: flex;
  align-items: center;
  width: 452px;
  padding-left: 9px;
}

.quick .ic { margin-left: 4px; }
.quick .q1 { margin-left: 6px; }
.quick .undo { margin: 0 5px 0 5px; width: 10px; }
.quick .redo { margin: 0 6px 0 5px; width: 10px; fill: #5d6570; }
.quick .bar { margin-left: 5px; border-top-width: 4px; }
.quick .share { margin: 0 4px 0 5px; width: 10px; }

.logo {
  width: 15px;
  height: 14px;
  margin-right: 2px;
  border-left: 3px solid #7d1238;
  background: #d5114d;
  color: #fff;
  font-size: 10px;
  font-weight: 700;
  line-height: 13px;
  text-align: center;
}

.doc-title { width: 396px; letter-spacing: -.45px; word-spacing: .6px; }

.account { display: flex; align-items: center; flex: 1; }

.right-arrow {
  border: 2.500px solid transparent;
  border-left: 3px solid #e3e5e9;
  border-right: 0;
}

.search {
  width: 118px;
  height: 14px;
  margin-left: 4px;
  padding-left: 2px;
  background: #3b4351;
  color: #a8adb6;
  font-style: italic;
  line-height: 13px;
  letter-spacing: -.45px;
}

.mag { width: 10px; margin-left: 4px; }
.user { width: 11px; margin-left: 5px; }
.sign { margin: 0 33px 0 3px; }
.cart { width: 10px; margin: 0 6px 0 8px; }
.account .dot { margin-left: 2px; }
.help { margin: 0 3px 0 13px; }
.help text { fill: #222932; font-size: 9px; font-weight: 700; }

.window-buttons { display: flex; gap: 21px; padding-right: 9px; }
.window-buttons .ic { width: 10px; height: 10px; }

/* Ribbon tabs */
.tabs {
  display: flex;
  align-items: center;
  height: 13px;
  padding-left: 2px;
  color: #b4b9c2;
  line-height: 13px;
  letter-spacing: -.25px;
}

.tab { width: 35px; text-align: center; }
.tab.active { width: 33px; background: var(--panel); color: #fff; }
.tab:nth-child(3) { width: 45px; }
.tab:nth-child(4) { width: 51px; }
.tab:nth-child(5) { width: 31px; }
.tab:nth-child(6) { width: 40px; }
.tab:nth-child(7) { width: 41px; }
.tab:nth-child(8) { width: 39px; }
.tab:nth-child(9) { width: 55px; }
.tab:nth-child(10) { width: 58px; }
.tab:nth-child(11) { width: 65px; }

.tab-box {
  width: 10px;
  height: 6px;
  margin: 2px 3px 0 13px;
  border: 2px solid #f3f3f5;
  background: #444b58;
}

/* Ribbon */
.ribbon {
  display: flex;
  height: 66px;
  background: var(--panel);
}

.panel {
  flex: none;
  display: flex;
  flex-direction: column;
  border-right: 1px solid var(--line);
}

.tools {
  display: grid;
  height: 53px;
  padding-top: 3px;
}

.caption {
  display: flex;
  align-items: center;
  justify-content: center;
  gap: 4px;
  height: 13px;
  padding-bottom: 1px;
}

.caption small { margin: 0 0 0 auto; font-size: 6px; }

.big {
  display: flex;
  flex-direction: column;
  align-items: center;
  text-align: center;
}

.big svg { width: 22px; height: 22px; margin: 1px 0 3px; }
.big .dot { margin-top: 2px; }

.stack { display: flex; flex-direction: column; }

.small {
  display: flex;
  align-items: center;
  gap: 4px;
  height: 16px;
}

.small svg { width: 11px; height: 11px; }
.small .dot { margin-left: 2px; }
.icons .small { justify-content: center; }
.carets .dot { margin-left: auto; }

.draw { width: 149px; }
.draw .tools { grid-template-columns: 28px 29px 38px 24px 1fr; }
.draw .stack { padding-left: 4px; }
.modify { width: 167px; }
.modify .tools { grid-template-columns: 48px 48px 39px 1fr; padding-left: 4px; }
.modify .carets { margin-left: -1px; }
.annotation { width: 124px; }
.annotation .tools { grid-template-columns: 29px 40px 1fr; padding-left: 1px; }
.annotation .stack { padding-left: 4px; }
.layers { width: 182px; }
.layers .tools { grid-template-columns: 42px 1fr; }
.block { width: 107px; }
.block .tools { grid-template-columns: 29px 1fr; }
.props { width: 156px; }
.props .tools { grid-template-columns: 40px 13px 1fr; padding-right: 3px; }
.props .caption { padding-left: 51px; }
.groups { width: 45px; }
.groups .tools { grid-template-columns: 27px 1fr; }
.utilities { width: 64px; }
.utilities .tools { grid-template-columns: 47px 1fr; }
.clipboard { width: 61px; }
.clipboard .tools { grid-template-columns: 36px 16px; }
.view { width: 41px; }
.view .caption { padding-left: 3px; }
.reference { width: 176px; border: 0; }
.reference .tools { grid-template-columns: 36px 38px 51px 51px; }
.reference .big:nth-child(3) { border-left: 1px solid var(--line); }

.combo {
  display: flex;
  align-items: center;
  gap: 4px;
  height: 13px;
  padding: 0 3px;
  background: var(--combo);
}

.combo .caret { margin-left: auto; }

.layer-grid { padding: 2px 2px 0 0; }
.layer-grid svg { width: 10px; height: 11px; }
.layer-combo svg { height: 10px; }
.layer-combo { margin-bottom: 1px; gap: 3px; }
.layer-row { display: flex; align-items: center; gap: 5.500px; height: 16px; padding-left: 3px; }

.combos { display: flex; flex-direction: column; gap: 3px; padding: 2px 0 0 2px; }
.rule { flex: none; width: 43px; height: 1px; background: #c7ccd5; }
.combos .rule + span { margin-left: -3px; }

.wheel {
  width: 11px;
  height: 11px;
  border-radius: 50%;
  background: conic-gradient(#e3c545, #e8793f, #d3588c, #8169c3, #5597d3, #51b56d, #e3c545);
}

.small svg.on { width: 16px; height: 14px; background: #2f5263; outline: 1px solid #6f9dc0; outline-offset: -1px; }

/* Open files */
.files {
  display: flex;
  align-items: center;
  height: 18px;
}

.burger { width: 12px; height: 12px; margin-left: 9px; }
.burger path { stroke-width: 1.300; }
.start { width: 37px; margin-left: 5px; padding-left: 2px; text-align: center; }
.plus { width: 12px; height: 12px; }
.plus path { stroke-width: 1.300; }
.slash { color: #3e4552; }

.file.current {
  width: 115px;
  height: 18px;
  margin-right: 5px;
  padding-left: 6px;
  background: var(--panel);
  clip-path: polygon(5px 0, 100% 0, calc(100% - 6px) 100%, 0 100%);
  color: #fff;
  font-weight: 600;
  line-height: 18px;
  letter-spacing: -.38px;
}

.file.current em { margin-left: 5px; color: #b6bbc4; font-size: 10px; font-style: normal; font-weight: 400; }

/* Work area */
.work {
  display: flex;
  height: 553px;
  border-top: 3px solid #3f4756;
  background: #3a4150;
}

.palette {
  width: 194px;
  background: var(--panel);
  letter-spacing: -.26px;
}

.palette h2 {
  height: 13px;
  padding-left: 5px;
  margin-left: 3px;
  border-left: 1px solid #565e6c;
  background: #2d343f;
  color: #d0d4db;
  font-size: 8.400px;
  font-weight: 400;
  line-height: 13px;
  letter-spacing: -.45px;
}

.selection {
  display: flex;
  align-items: center;
  gap: 5px;
  height: 27px;
  padding: 7px 0 0 11px;
}

.selection .combo { width: 127px; height: 13px; padding: 0 3px 0 2px; }
.selection svg { width: 11px; height: 11px; }

.palette h3 {
  display: flex;
  align-items: center;
  justify-content: space-between;
  width: 176px;
  height: 13px;
  margin: 2px 0 0 11px;
  padding: 0 5px 0 4px;
  background: #2b313c;
  color: #fff;
  font-size: 8.400px;
  font-weight: 700;
  letter-spacing: -.38px;
}

.selection + h3 { margin-top: 0; }

.palette dl {
  display: grid;
  grid-template-columns: 84px 80px;
  grid-auto-rows: 12.680px;
  margin-left: 23px;
}

.palette dt, .palette dd {
  display: flex;
  align-items: center;
  padding: 1px 0 0 3px;
  border-bottom: 1px solid #444c5b;
  border-right: 1px solid #444c5b;
  color: #c6cad2;
}

.palette dd { padding-left: 4px; color: #e2e5ea; }
.palette dd.off { color: #868d99; }
.palette dd .swatch { margin: 0 4px 0 1px; }
.palette dd .rule { width: 35px; margin: 0 3px 0 1px; }

.right {
  display: flex;
  flex-direction: column;
  width: 1075px;
  margin-left: 4px;
}

.canvas {
  width: 1075px;
  height: 503px;
  overflow: hidden;
  background: #212930;
  letter-spacing: 0;
}

.road path { fill: none; stroke: #27c531; stroke-width: 1.100; }
.view-label { fill: #c9ccd1; font-size: 8.400px; }
.doc-buttons path { fill: none; stroke: #e8eaec; stroke-width: 1.300; }

.viewcube text {
  fill: #b4b6ba;
  font-family: "Liberation Sans", sans-serif;
  font-size: 13px;
  font-weight: 700;
  text-anchor: middle;
}

.viewcube circle { fill: none; stroke: #474d56; stroke-width: 8; }
.viewcube rect { fill: #c2c2c5; }
.viewcube .top { fill: #55585d; font-size: 8px; }
.viewcube .wcs { fill: #9b9da3; }
.viewcube .wcs-text { fill: #6c7078; font-size: 7.500px; font-weight: 400; }

.navbar rect { fill: #5c6269; }
.navbar path { fill: none; stroke: #484e56; }
.ucs path { fill: none; stroke: #c3c6ca; }

.prompt rect { fill: #a5a1aa; stroke: #c0bdc4; stroke-width: .5; }
.prompt text { fill: #24242a; font-size: 7.900px; }
.prompt .key { fill: #eee; }
.prompt path { fill: none; stroke: #444; stroke-width: .8; }
.cursor circle { fill: #ced90f; opacity: .94; }
.cursor rect { fill: none; stroke: #eff08d; stroke-width: 1; }

/* Command line */
.command {
  display: flex;
  height: 41px;
  margin-top: 3px;
}

.command-side {
  display: flex;
  flex-direction: column;
  align-items: center;
  gap: 5px;
  width: 15px;
  padding-top: 3px;
  background: #2a303b;
}

.grip { width: 11px; height: 4px; background: repeating-linear-gradient(90deg, #a9aeb8 0 1px, #2a303b 1px 2px); }
.command-side svg { width: 8px; height: 8px; }
.command-side svg:last-child { width: 11px; height: 11px; }

.command-text {
  flex: 1;
  color: #24242a;
  font-family: "DejaVu Sans Mono", monospace;
  font-size: 7.740px;
  letter-spacing: 0;
}

.history {
  height: 28px;
  padding: 6px 0 0 2px;
  border-bottom: 1px solid #8d8c90;
  background: #c9c8cb;
}

.input {
  display: flex;
  align-items: center;
  height: 13px;
  padding-left: 3px;
  background: #fff;
}

.input svg { width: 11px; height: 9px; }
.input svg path { fill: none; stroke: #6b6f78; }
.input .caret { margin: 0 1px; border-width: 3px 3px 0; border-top-color: #44474d; }
.input mark { display: inline-block; background: #d4d3d9; color: #24242a; line-height: 10px; }
.input mark::first-letter { color: #4a3ac0; font-weight: 700; }

/* Status bar */
.status {
  display: flex;
  align-items: center;
  height: 19px;
}

.layout {
  width: 39px;
  height: 16px;
  line-height: 16px;
  text-align: center;
}

.layout.current {
  width: 43px;
  margin-left: 7px;
  background: var(--panel);
  clip-path: polygon(5px 0, 100% 0, calc(100% - 5px) 100%, 0 100%);
  color: #fff;
  font-weight: 700;
}

.layout:lang(fa) { margin-left: -3px; font-family: "DejaVu Sans", sans-serif; font-size: 8px; letter-spacing: 0; }
.status > .slash { margin: 0 5px 0 0; }
.status > .plus + .slash { margin-left: 8px; }

.toggles { display: flex; align-items: center; height: 19px; margin-left: auto; background: #2b323d; }

.cell {
  display: flex;
  align-items: center;
  justify-content: center;
  width: 16px;
  height: 16px;
}

.cell svg { width: 12px; height: 12px; }
.cell.on { background: var(--blue); border: 1px solid #4b6d96; }
.cell.on .l { stroke: #eef3fa; }
.cell.model { width: 34px; letter-spacing: -.2px; }
.cell.arrow { width: 10.500px; }
.cell.arrow.wide { width: 12px; }
.cell.gap { margin-right: 2.500px; }
.cell.shift { margin-left: 1px; }
.cell.scale { width: 14px; }
.cell.tool { width: 17.600px; }
.gear { fill: none; stroke: #d2d6dd; stroke-width: 2; stroke-dasharray: 1.800 1.730; }
```
